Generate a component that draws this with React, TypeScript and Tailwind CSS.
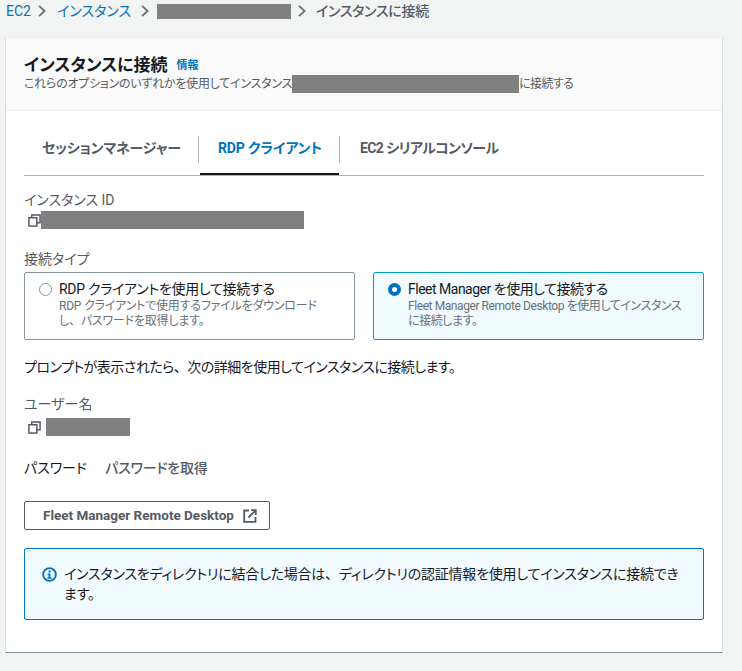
const font = "font-['Roboto','Noto_Sans_CJK_JP',sans-serif] [font-feature-settings:'palt']";

function Redacted({ className }: { className: string }) {
  return <div className={`bg-[#808080] shrink-0 ${className}`} />;
}

// full-width comma, the rest of the text stays proportional
function Comma() {
  return <span className="[font-feature-settings:normal]">、</span>;
}

function CopyIcon() {
  return (
    <svg viewBox="0 0 14 14" className="w-[13px] h-[13px] shrink-0" fill="none" stroke="#545b64" strokeWidth="1.6">
      <rect x="1" y="4" width="8.5" height="9" />
      <path d="M4 4V1h9v8.5H9.5" />
    </svg>
  );
}

function ExternalIcon() {
  return (
    <svg viewBox="0 0 14 14" className="w-[14px] h-[14px] shrink-0" fill="none" stroke="#545b64" strokeWidth="1.8">
      <path d="M6 1.5H1.2v11.3h11.3V8" />
      <path d="M8 1.2h4.8V6M12.6 1.4 5.5 8.5" />
    </svg>
  );
}

function InfoIcon() {
  return (
    <svg viewBox="0 0 16 16" className="w-[15px] h-[15px] shrink-0">
      <circle cx="8" cy="8" r="6.8" fill="none" stroke="#0073bb" strokeWidth="2" />
      <rect x="7" y="3.6" width="2.2" height="2.2" fill="#0073bb" />
      <path d="M6 7h3v4h1.2v1.4H5.8V11H7V8.4H6z" fill="#0073bb" />
    </svg>
  );
}

function Crumb({ className }: { className: string }) {
  return (
    <svg viewBox="0 0 8 12" className={`w-[8px] h-[12px] shrink-0 ${className}`} fill="none" stroke="#687078" strokeWidth="1.8">
      <path d="M1 .8 6.6 6 1 11.2" />
    </svg>
  );
}

function Tab({ label, active, className, textClass }: { label: string; active?: boolean; className: string; textClass: string }) {
  return (
    <div className={`relative h-[39px] flex items-start pt-[4px] ${className}`}>
      <span className={`text-[14px] leading-[17px] font-bold whitespace-nowrap ${textClass} ${active ? "text-[#0073bb]" : "text-[#545b64]"}`}>{label}</span>
      {active && <div className="absolute left-0 right-0 bottom-0 h-[2px] bg-[#16191f]" />}
    </div>
  );
}

function OptionCard({
  title,
  desc,
  selected,
  titleClass,
  descClass,
}: {
  title: string;
  desc: React.ReactNode;
  selected?: boolean;
  titleClass: string;
  descClass: string;
}) {
  return (
    <div
      className={`w-[331px] h-[68px] rounded-[2px] border px-[14px] pt-[7px] flex gap-[7px] ${
        selected ? "border-[#00a1c9] bg-[#f1faff]" : "border-[#879596] bg-white"
      }`}
    >
      {selected ? (
        <div className="w-[13px] h-[13px] mt-[3px] rounded-full border-[4px] border-[#0073bb] bg-white shrink-0" />
      ) : (
        <div className="w-[13px] h-[13px] mt-[3px] rounded-full border border-[#879596] bg-white shrink-0" />
      )}
      <div className="whitespace-nowrap">
        <div className={`text-[14px] leading-[18px] text-[#16191f] ${titleClass}`}>{title}</div>
        <div className={`text-[12px] leading-[15px] text-[#687078] mt-[1px] ${descClass}`}>{desc}</div>
      </div>
    </div>
  );
}

export default function App() {
  return (
    <div className={`min-h-[671px] bg-[#f2f3f3] ${font} text-[#16191f] overflow-hidden`}>
      <div className="h-[22px] flex items-center pl-[6px] text-[14px] whitespace-nowrap">
        <span className="text-[#0073bb] w-[21px]">EC2</span>
        <Crumb className="ml-[11px]" />
        <span className="text-[#0073bb] ml-[11px] w-[74px]">インスタンス</span>
        <Crumb className="ml-[10px]" />
        <Redacted className="w-[134px] h-[15px] ml-[8px]" />
        <Crumb className="ml-[7px]" />
        <span className="text-[#545b64] ml-[10px] font-medium tracking-[-0.3px]">インスタンスに接続</span>
      </div>

      <div className="ml-[5px] mt-[15px] w-[718px] h-[616px] bg-white border border-[#eaeded] border-l-[#d5dbdb] border-r-[#d5dbdb] border-b-[#879596]">
        <div className="h-[73px] bg-[#fafafa] border-b border-[#eaeded] px-[18px] pt-[17px]">
          <div className="flex items-center h-[20px]">
            <h1 className="text-[17px] leading-[20px] font-bold">インスタンスに接続</h1>
            <span className="ml-[9px] mt-[2px] text-[11px] font-bold text-[#0073bb]">情報</span>
          </div>
          <div className="flex items-center h-[18px] text-[12px] text-[#545b64] tracking-[-0.24px]">
            これらのオプションのいずれかを使用してインスタンス
            <Redacted className="w-[227px] h-[18px]" />
            <span className="tracking-[-0.6px]">に接続する</span>
          </div>
        </div>

        <div className="px-[18px]">
          <div className="mt-[25px] flex items-start border-b border-[#aab7b8] h-[40px]">
            <Tab label="セッションマネージャー" textClass="tracking-[-0.2px]" className="w-[174px] pl-[18px]" />
            <div className="w-px h-[27px] bg-[#aab7b8]" />
            <Tab label="RDP クライアント" textClass="tracking-[-0.15px]" active className="w-[139px] pl-[18px] ml-[1px]" />
            <div className="w-px h-[27px] bg-[#aab7b8]" />
            <Tab label="EC2 シリアルコンソール" textClass="tracking-[-0.6px]" className="pl-[20px]" />
          </div>

          <div className="mt-[15px] text-[14px] leading-[18px] text-[#545b64]">インスタンス ID</div>
          <div className="mt-[2px] flex items-center h-[18px] pl-[4px]">
            <CopyIcon />
            <Redacted className="w-[263px] h-[18px]" />
          </div>

          <div className="mt-[21px] text-[14px] leading-[18px] text-[#545b64]">接続タイプ</div>
          <div className="mt-[4px] flex gap-[18px]">
            <OptionCard
              title="RDP クライアントを使用して接続する"
              titleClass="tracking-[-0.3px]"
              descClass="tracking-[-0.2px]"
              desc={<>RDP クライアントで使用するファイルをダウンロード<br />し<Comma />パスワードを取得します。</>}
            />
            <OptionCard
              selected
              title="Fleet Manager を使用して接続する"
              titleClass="tracking-[-0.5px]"
              descClass="tracking-[-0.42px]"
              desc={<>Fleet Manager Remote Desktop を使用してインスタンス<br />に接続します。</>}
            />
          </div>

          <div className="mt-[18px] text-[14px] leading-[18px] tracking-[-0.51px]">
            プロンプトが表示されたら<Comma />次の詳細を使用してインスタンスに接続します。
          </div>

          <div className="mt-[19px] text-[14px] leading-[18px] text-[#545b64]">ユーザー名</div>
          <div className="mt-[5px] flex items-center h-[18px] pl-[4px] gap-[5px]">
            <CopyIcon />
            <Redacted className="w-[84px] h-[18px]" />
          </div>

          <div className="mt-[23px] flex items-center h-[18px] text-[14px]">
            <span>パスワード</span>
            <span className="ml-[18px] font-medium text-[#545b64] tracking-[-0.2px]">パスワードを取得</span>
          </div>

          <div className="mt-[24px] w-[246px] h-[29px] rounded-[2px] border border-[#545b64] flex items-center pl-[18px] gap-[9px] text-[13.5px] font-bold text-[#545b64] whitespace-nowrap">
            Fleet Manager Remote Desktop
            <ExternalIcon />
          </div>

          <div className="mt-[18px] h-[72px] rounded-[2px] border border-[#0073bb] bg-[#f1faff] flex pl-[17px] pt-[15px] gap-[7px]">
            <div className="pt-[3px]"><InfoIcon /></div>
            <div className="text-[14px] leading-[20px] whitespace-nowrap tracking-[-0.22px]">
              インスタンスをディレクトリに結合した場合は<Comma />ディレクトリの認証情報を使用してインスタンスに接続でき<br />ます。
            </div>
          </div>
        </div>
      </div>
    </div>
  );
}
